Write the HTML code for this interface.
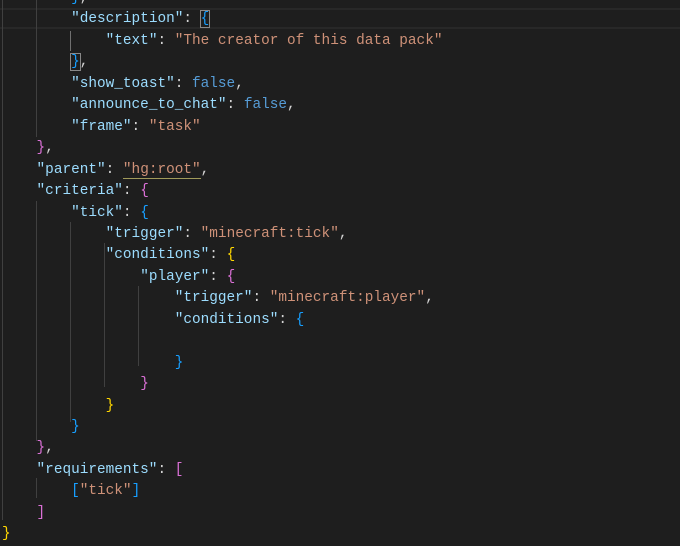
<!DOCTYPE html>
<html><head><style>
body{margin:0;background:#1e1e1e;width:680px;height:544px;overflow:hidden;position:relative;font-family:"Liberation Mono",monospace;font-size:14.4px;}
.l{position:absolute;left:2px;white-space:pre;line-height:21.4px;height:21.4px;color:#d4d4d4;}
.k{color:#9cdcfe}.s{color:#ce9178}.b{color:#569cd6}
.y{color:#ffd700}.p{color:#da70d6}.c{color:#179fff}
.g{position:absolute;width:1px;background:#404040;}
.cur{position:absolute;left:0;width:680px;top:8px;height:21px;border-top:2px solid #282828;border-bottom:2px solid #282828;box-sizing:border-box}
.u{border-bottom:1px solid #a09a5a}
.bx{outline:1px solid #888;}
</style></head><body>
<div class="cur"></div>
<div class="g" style="left:2px;top:0;height:520px"></div>
<div class="g" style="left:36px;top:0;height:137px"></div>
<div class="g" style="left:36px;top:201px;height:240px"></div>
<div class="g" style="left:36px;top:478px;height:20px"></div>
<div class="g" style="left:70px;top:31px;height:20px;background:#707070"></div>
<div class="g" style="left:70px;top:222px;height:200px"></div>
<div class="g" style="left:104px;top:243px;height:144px"></div>
<div class="g" style="left:138px;top:286px;height:80px"></div>
<div id="c"></div>
<script>
var L=[
'        <span class="c">}</span>,',
'        <span class="k">"description"</span>: <span class="c bx">{</span>',
'            <span class="k">"text"</span>: <span class="s">"The creator of this data pack"</span>',
'        <span class="c bx">}</span>,',
'        <span class="k">"show_toast"</span>: <span class="b">false</span>,',
'        <span class="k">"announce_to_chat"</span>: <span class="b">false</span>,',
'        <span class="k">"frame"</span>: <span class="s">"task"</span>',
'    <span class="p">}</span>,',
'    <span class="k">"parent"</span>: <span class="s u">"hg:root"</span>,',
'    <span class="k">"criteria"</span>: <span class="p">{</span>',
'        <span class="k">"tick"</span>: <span class="c">{</span>',
'            <span class="k">"trigger"</span>: <span class="s">"minecraft:tick"</span>,',
'            <span class="k">"conditions"</span>: <span class="y">{</span>',
'                <span class="k">"player"</span>: <span class="p">{</span>',
'                    <span class="k">"trigger"</span>: <span class="s">"minecraft:player"</span>,',
'                    <span class="k">"conditions"</span>: <span class="c">{</span>',
'',
'                    <span class="c">}</span>',
'                <span class="p">}</span>',
'            <span class="y">}</span>',
'        <span class="c">}</span>',
'    <span class="p">}</span>,',
'    <span class="k">"requirements"</span>: <span class="p">[</span>',
'        <span class="c">[</span><span class="s">"tick"</span><span class="c">]</span>',
'    <span class="p">]</span>',
'<span class="y">}</span>'];
var h='';for(var i=0;i<L.length;i++){h+='<div class="l" style="top:'+(-12+i*21.45)+'px">'+L[i]+'</div>';}
document.getElementById('c').innerHTML=h;
</script>
</body></html>
